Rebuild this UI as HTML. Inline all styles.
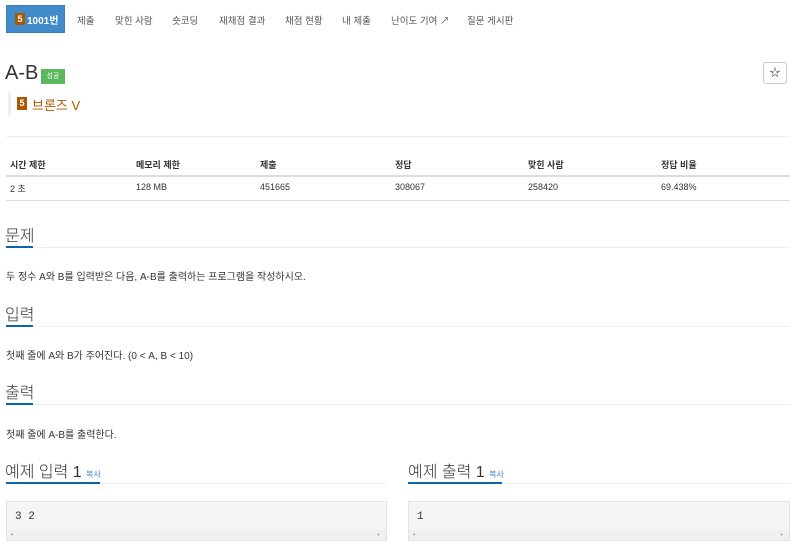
<!DOCTYPE html><html><head><meta charset="utf-8"><style>
body{margin:0;width:800px;height:547px;overflow:hidden;background:#fff;font-family:"Liberation Sans","Noto Sans CJK KR",sans-serif;color:#333;position:relative}
.a{position:absolute;white-space:nowrap}
.nav{font-size:9.5px;color:#555;top:13px}
.h{font-size:16px;color:#333;font-weight:300}
.ul{position:absolute;height:2px;background:#0e64a8}
.gl{position:absolute;height:1px;background:#eee}
.t{font-size:10px;color:#333}
.sh{font-size:8px;color:#3380c9;font-weight:400}
.pre{position:absolute;top:501px;height:40px;background:#f5f5f5;border:1px solid #e3e3e3;box-sizing:border-box}
.pre span{position:absolute;left:8px;top:9px;font-family:"Liberation Mono",monospace;font-size:11px}
.sb{position:absolute;left:0;right:0;bottom:0;height:10px;background:#f0f0f0;font-size:6px;color:#999}
</style></head><body>
<div class="a" style="left:6px;top:5px;width:59px;height:28px;background:#428bca;border:1px solid #3a7fc0;box-sizing:border-box"></div>
<div class="a" style="left:15px;top:13px;width:10px;height:12px;background:#ad5600;color:#fff;font-size:9px;font-weight:bold;text-align:center;line-height:12px">5</div>
<div class="a" style="left:27px;top:12px;color:#fff;font-size:10px;font-weight:bold">1001번</div>
<div class="a nav" style="left:77px">제출</div>
<div class="a nav" style="left:115px">맞힌 사람</div>
<div class="a nav" style="left:172px">숏코딩</div>
<div class="a nav" style="left:219px">재채점 결과</div>
<div class="a nav" style="left:285px">채점 현황</div>
<div class="a nav" style="left:342px">내 제출</div>
<div class="a nav" style="left:391px">난이도 기여 ↗</div>
<div class="a nav" style="left:467px">질문 게시판</div>
<div class="a" style="left:5px;top:62px;font-size:20px;color:#333">A-B</div>
<div class="a" style="left:41px;top:69px;width:24px;height:15px;background:#5cb85c;color:#fff;font-size:7px;text-align:center;line-height:15px">성공</div>
<div class="a" style="left:763px;top:62px;width:24px;height:22px;border:1px solid #ccc;border-radius:3px;box-sizing:border-box;text-align:center;line-height:20px;font-size:11px">☆</div>
<div class="a" style="left:8px;top:93px;width:3px;height:22px;background:#eee"></div>
<div class="a" style="left:17px;top:97px;width:10px;height:13px;background:#ad5600;color:#fff;font-size:9px;font-weight:bold;text-align:center;line-height:12px">5</div>
<div class="a" style="left:32px;top:95px;font-size:13px;color:#ad5600">브론즈 V</div>
<div class="gl" style="left:6px;top:136px;width:784px"></div>
<div class="a t" style="left:10px;top:158px;font-weight:bold;font-size:9px">시간 제한</div>
<div class="a t" style="left:136px;top:158px;font-weight:bold;font-size:9px">메모리 제한</div>
<div class="a t" style="left:260px;top:158px;font-weight:bold;font-size:9px">제출</div>
<div class="a t" style="left:395px;top:158px;font-weight:bold;font-size:9px">정답</div>
<div class="a t" style="left:528px;top:158px;font-weight:bold;font-size:9px">맞힌 사람</div>
<div class="a t" style="left:661px;top:158px;font-weight:bold;font-size:9px">정답 비율</div>
<div class="a" style="left:6px;top:175px;width:784px;height:2px;background:#ddd"></div>
<div class="a t" style="left:10px;top:182px;font-size:9px">2 초</div>
<div class="a t" style="left:136px;top:182px;font-size:9px">128 MB</div>
<div class="a t" style="left:260px;top:182px;font-size:9px">451665</div>
<div class="a t" style="left:395px;top:182px;font-size:9px">308067</div>
<div class="a t" style="left:528px;top:182px;font-size:9px">258420</div>
<div class="a t" style="left:661px;top:182px;font-size:9px">69.438%</div>
<div class="gl" style="left:6px;top:200px;width:784px;background:#ddd"></div>
<div class="a h" style="left:5px;top:222px">문제</div>
<div class="gl" style="left:6px;top:247px;width:784px"></div><div class="ul" style="left:6px;top:246px;width:27px"></div>
<div class="a t" style="left:6px;top:268px">두 정수 A와 B를 입력받은 다음, A-B를 출력하는 프로그램을 작성하시오.</div>
<div class="a h" style="left:5px;top:301px">입력</div>
<div class="gl" style="left:6px;top:326px;width:784px"></div><div class="ul" style="left:6px;top:325px;width:27px"></div>
<div class="a t" style="left:6px;top:347px">첫째 줄에 A와 B가 주어진다. (0 &lt; A, B &lt; 10)</div>
<div class="a h" style="left:5px;top:379px">출력</div>
<div class="gl" style="left:6px;top:404px;width:784px"></div><div class="ul" style="left:6px;top:403px;width:27px"></div>
<div class="a t" style="left:6px;top:426px">첫째 줄에 A-B를 출력한다.</div>
<div class="a h" style="left:5px;top:458px">예제 입력 1 <span class="sh">복사</span></div>
<div class="gl" style="left:6px;top:483px;width:381px"></div><div class="ul" style="left:6px;top:482px;width:94px"></div>
<div class="a h" style="left:408px;top:458px">예제 출력 1 <span class="sh">복사</span></div>
<div class="gl" style="left:408px;top:483px;width:382px"></div><div class="ul" style="left:408px;top:482px;width:94px"></div>
<div class="pre" style="left:6px;width:381px"><span>3 2</span><div class="sb"><span style="left:3px;top:1px;font-size:6px">◂</span><span style="left:370px;top:1px;font-size:6px">▸</span></div></div>
<div class="pre" style="left:408px;width:382px"><span>1</span><div class="sb"><span style="left:3px;top:1px;font-size:6px">◂</span><span style="left:371px;top:1px;font-size:6px">▸</span></div></div>
</body></html>
